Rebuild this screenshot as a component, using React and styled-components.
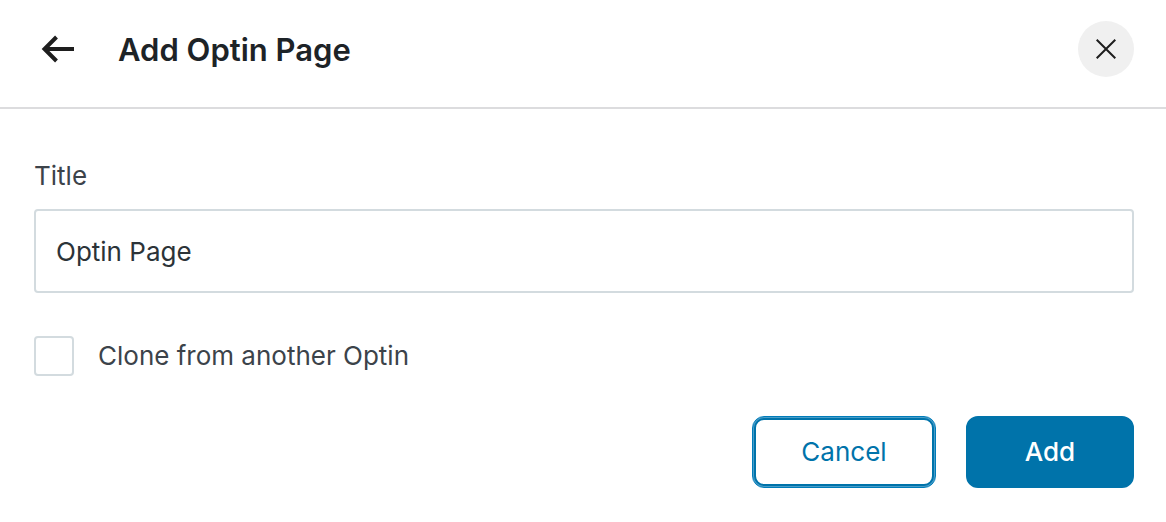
import React, { useState } from "react";
import styled, { createGlobalStyle } from "styled-components";

const GlobalStyle = createGlobalStyle`
  *, *::before, *::after { box-sizing: border-box; }
  body {
    margin: 0;
    background: #fff;
    color: #3c434a;
    font-family: Inter, "Liberation Sans", sans-serif;
    font-size: 26px;
    line-height: 32px;
  }
  button, input { font: inherit; }
`;

const Header = styled.header`
  display: flex;
  align-items: center;
  padding: 21px 32px 30px 40px;
  border-bottom: 2px solid #dcdcde;
`;

const IconButton = styled.button`
  display: flex;
  align-items: center;
  justify-content: center;
  width: ${(p) => (p.$round ? "56px" : "36px")};
  height: ${(p) => (p.$round ? "56px" : "36px")};
  padding: 0;
  border: 0;
  border-radius: ${(p) => (p.$round ? "50%" : "0")};
  background: ${(p) => (p.$round ? "#f0f0f0" : "transparent")};
  color: #1e1e1e;
  cursor: pointer;
`;

const Heading = styled.h1`
  flex: 1;
  margin: 0 0 0 42px;
  padding-top: 2px;
  color: #1d2327;
  font-size: 31px;
  font-weight: 600;
  line-height: 40px;
`;

const Form = styled.form`
  display: flex;
  flex-direction: column;
  padding: 51px 32px 32px 34px;
`;

const Label = styled.label`
  margin-bottom: 17px;
`;

const TextInput = styled.input`
  width: 100%;
  height: 84px;
  padding: 0 20px;
  border: 2px solid #d3dbdf;
  border-radius: 4px;
  background: #fff;
  color: #2c3338;
  outline: 0;
`;

const CheckRow = styled.label`
  display: flex;
  align-items: center;
  align-self: flex-start;
  gap: 24px;
  margin-top: 43px;
`;

const Checkbox = styled.input`
  appearance: none;
  width: 40px;
  height: 40px;
  margin: 0;
  border: 2px solid #d3dbdf;
  border-radius: 4px;
  background: #fff;
  &:checked { background: #0073aa; }
`;

const Actions = styled.div`
  display: flex;
  justify-content: flex-end;
  gap: 30px;
  margin-top: 40px;
`;

const Button = styled.button`
  min-width: ${(p) => (p.$primary ? "168px" : "184px")};
  height: 72px;
  padding: 0 40px;
  border: ${(p) => (p.$primary ? "2px solid #0073aa" : "1px solid #007cba")};
  border-radius: 12px;
  background: ${(p) => (p.$primary ? "#0073aa" : "#fff")};
  box-shadow: ${(p) => (p.$primary ? "none" : "inset 0 0 0 1px #4a9dc8, inset 0 0 0 3px #0073aa")};
  color: ${(p) => (p.$primary ? "#fff" : "#0073aa")};
  font-weight: ${(p) => (p.$primary ? 500 : 400)};
  cursor: pointer;
`;

export default function App() {
  const [title, setTitle] = useState("Optin Page");
  return (
    <>
      <GlobalStyle />
      <main>
        <Header>
          <IconButton type="button" aria-label="Back">
            <svg width="36" height="36" viewBox="0 0 36 36" fill="none" stroke="currentColor" strokeWidth="4">
              <path d="M34 18H5M16.5 6L4.5 18L16.5 30" />
            </svg>
          </IconButton>
          <Heading>Add Optin Page</Heading>
          <IconButton type="button" aria-label="Close" $round>
            <svg width="20" height="20" viewBox="0 0 20 20" fill="none" stroke="currentColor" strokeWidth="2">
              <path d="M0.7 0.7L19.3 19.3M19.3 0.7L0.7 19.3" />
            </svg>
          </IconButton>
        </Header>
        <Form onSubmit={(e) => e.preventDefault()}>
          <Label htmlFor="title">Title</Label>
          <TextInput id="title" type="text" value={title} onChange={(e) => setTitle(e.target.value)} />
          <CheckRow>
            <Checkbox type="checkbox" />
            Clone from another Optin
          </CheckRow>
          <Actions>
            <Button type="button">Cancel</Button>
            <Button type="submit" $primary>Add</Button>
          </Actions>
        </Form>
      </main>
    </>
  );
}
